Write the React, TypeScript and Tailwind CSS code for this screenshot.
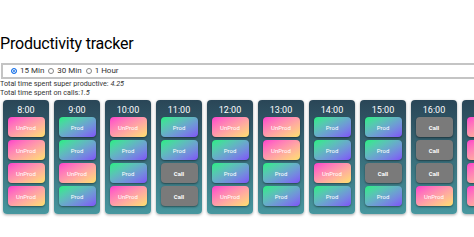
import React from "react";

type Kind = "U" | "P" | "C";

const cols: { t: string; items: Kind[] }[] = [
  { t: "8:00", items: ["U", "U", "U", "U"] },
  { t: "9:00", items: ["P", "P", "U", "P"] },
  { t: "10:00", items: ["U", "P", "P", "U"] },
  { t: "11:00", items: ["P", "P", "C", "C"] },
  { t: "12:00", items: ["U", "P", "P", "U"] },
  { t: "13:00", items: ["U", "U", "P", "P"] },
  { t: "14:00", items: ["P", "P", "U", "P"] },
  { t: "15:00", items: ["P", "P", "C", "P"] },
  { t: "16:00", items: ["C", "C", "C", "U"] },
  { t: "17:00", items: ["U", "U", "U", "U"] },
];

function Card({ k }: { k: Kind }) {
  if (k === "U")
    return (
      <div className="h-[20px] w-[37px] rounded-[4px] bg-gradient-to-br from-[#fd3ccb] to-[#fde06a] shadow-[0_1px_2px_rgba(0,0,0,0.45)] flex items-center justify-center text-[6px] text-white">
        UnProd
      </div>
    );
  if (k === "P")
    return (
      <div className="h-[20px] w-[37px] rounded-[4px] bg-gradient-to-br from-[#1ef07f] to-[#7f4ef8] shadow-[0_1px_2px_rgba(0,0,0,0.45)] flex items-center justify-center text-[6px] text-white">
        Prod
      </div>
    );
  return (
    <div className="h-[20px] w-[37px] rounded-[4px] bg-[#7a7a7a] shadow-[0_1px_2px_rgba(0,0,0,0.45)] flex items-center justify-center text-[6px] font-bold text-white">
      Call
    </div>
  );
}

function Radio({ checked }: { checked?: boolean }) {
  return (
    <span
      className={
        "inline-block h-[6px] w-[6px] rounded-full border " +
        (checked ? "border-[#1a73e8] bg-[#1a73e8] shadow-[inset_0_0_0_1px_#fff]" : "border-[#888] bg-white")
      }
    />
  );
}

export default function App() {
  return (
    <div className="w-[474px] h-[237px] overflow-hidden bg-white text-black" style={{ fontFamily: "Roboto, 'Liberation Sans', sans-serif" }}>
      <h1 className="pt-[34px] text-[16px] leading-[20px] font-normal tracking-[-0.2px]">Productivity tracker</h1>
      <div className="mt-[9px] ml-[1px] w-[480px] h-[16px] border-2 border-[#c4c4c4] flex items-center gap-[3px] pl-[8px] text-[8px] text-[#333]">
        <Radio checked />
        <span className="mr-[1px]">15 Min</span>
        <Radio />
        <span className="mr-[1px]">30 Min</span>
        <Radio />
        <span>1 Hour</span>
      </div>
      <div className="mt-[1px] text-[7.2px] leading-[8.5px] text-[#333]">
        <div>
          Total time spent super productive: <i>4.25</i>
        </div>
        <div>
          Total time spent on calls:<i>1.5</i>
        </div>
      </div>
      <div className="mt-[3px] ml-[3px] flex gap-[5px]">
        {cols.map((c) => (
          <div
            key={c.t}
            className="shrink-0 w-[46px] h-[114px] rounded-[4px] bg-gradient-to-b from-[#2a4657] to-[#47979f] shadow-[0_1px_3px_rgba(0,0,0,0.35)] flex flex-col items-center"
          >
            <div className="mt-[4px] h-[12px] leading-[12px] text-[9px] text-white">{c.t}</div>
            <div className="mt-[1px] flex flex-col gap-[3px]">
              {c.items.map((k, i) => (
                <Card key={i} k={k} />
              ))}
            </div>
          </div>
        ))}
      </div>
    </div>
  );
}
